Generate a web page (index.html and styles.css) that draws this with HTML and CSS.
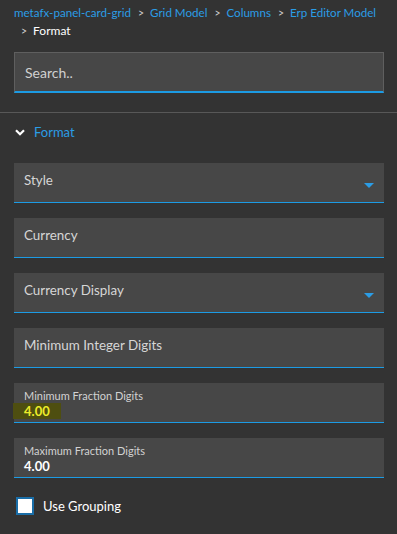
FILE: index.html
```html
<!DOCTYPE html>
<html lang="en">

<head>
    <meta charset="UTF-8">
    <meta name="viewport" content="width=device-width, initial-scale=1.0">
    <title>Format</title>
    <link rel="stylesheet" href="styles.css">
</head>

<body>
    <div class="crumbs">
        <a href="#">metafx-panel-card-grid</a><span class="sep">&gt;</span><a href="#">Grid Model</a><span class="sep">&gt;</span><a href="#">Columns</a><span class="sep">&gt;</span><a href="#">Erp Editor Model</a>
        <span class="sep">&gt;</span><span class="current">Format</span>
    </div>

    <div class="search-wrap">
        <input class="search" type="text" placeholder="Search..">
    </div>

    <div class="section">
        <div class="section-head">
            <svg class="chev" width="10" height="7" viewBox="0 0 10 7">
                <path d="M1 1.2 L5 5.2 L9 1.2" fill="none" stroke="#fff" stroke-width="2.2"/>
            </svg>
            <span>Format</span>
        </div>

        <div class="fields">
            <div class="field select">
                <span class="label">Style</span>
                <span class="arrow"></span>
            </div>
            <div class="field">
                <span class="label">Currency</span>
            </div>
            <div class="field select">
                <span class="label">Currency Display</span>
                <span class="arrow"></span>
            </div>
            <div class="field">
                <span class="label">Minimum Integer Digits</span>
            </div>
            <div class="field filled">
                <span class="small-label">Minimum Fraction Digits</span>
                <span class="value hl">4.00</span>
            </div>
            <div class="field filled">
                <span class="small-label">Maximum Fraction Digits</span>
                <span class="value">4.00</span>
            </div>
        </div>

        <label class="check">
            <span class="box"></span>
            <span>Use Grouping</span>
        </label>
    </div>
</body>

</html>
```

FILE: styles.css
```css
* {
    margin: 0;
    padding: 0;
    box-sizing: border-box;
}

body {
    background-color: #333333;
    font-family: Lato, "Open Sans", sans-serif;
    color: #d6d6d6;
}

.crumbs {
    padding: 4px 14px 0 14px;
    font-size: 11.6px;
    line-height: 18px;
}

.crumbs a {
    color: #2b9de6;
    text-decoration: none;
    white-space: nowrap;
}

.crumbs .sep {
    color: #cfcfcf;
    font-size: 10.5px;
    margin: 0 6px 0 7px;
}

.crumbs .current {
    color: #ffffff;
    font-size: 12px;
}

.search-wrap {
    padding: 12px 13px 19px 14px;
    border-bottom: 1px solid #585858;
}

.search {
    display: block;
    width: 100%;
    height: 41px;
    background-color: #474747;
    border: 1px solid #5f5f5f;
    border-bottom: 2px solid #1c9be4;
    padding: 0 10px;
    font-family: inherit;
    font-size: 14px;
    color: #ddd;
    outline: none;
}

.search::placeholder {
    color: #d0d0d0;
}

.section {
    padding: 0 13px 0 14px;
}

.section-head {
    display: flex;
    align-items: center;
    height: 38px;
    padding-left: 1px;
    gap: 9px;
    color: #2b9de6;
    font-size: 13px;
    margin-bottom: 12px;
}

.fields {
    display: flex;
    flex-direction: column;
    gap: 15px;
}

.field {
    position: relative;
    height: 40px;
    background-color: #474747;
    border-bottom: 1.5px solid #1c9be4;
    padding: 0 10px;
    display: flex;
    flex-direction: column;
    justify-content: center;
}

.field .label {
    font-size: 13.4px;
    margin-top: -6px;
}

.arrow {
    position: absolute;
    right: 10px;
    top: 20px;
    width: 0;
    height: 0;
    border-left: 5px solid transparent;
    border-right: 5px solid transparent;
    border-top: 5px solid #2b9de6;
}

.small-label {
    font-size: 11px;
    line-height: 14px;
    color: #d2d2d2;
    margin-top: 2px;
}

.value {
    font-size: 13px;
    line-height: 16px;
    font-weight: bold;
    color: #ffffff;
}

.value.hl {
    color: #ecec2a;
    background-color: #4e4e10;
    margin-left: -11px;
    padding-left: 11px;
    width: 48px;
}

.check {
    display: flex;
    align-items: center;
    gap: 9px;
    margin-top: 19px;
    padding-left: 2px;
    font-size: 13px;
    color: #ffffff;
}

.check .box {
    width: 18px;
    height: 18px;
    background-color: #ffffff;
    border: 2px solid #1a6ea8;
}
```
